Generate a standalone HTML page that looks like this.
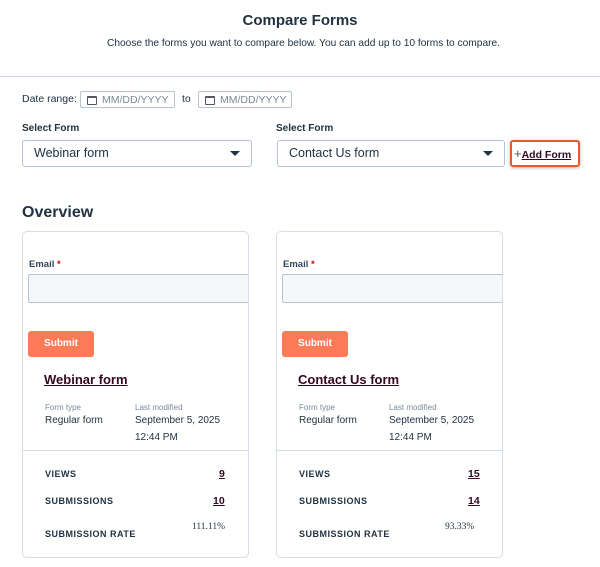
<!DOCTYPE html><html><head><style>
body{margin:0;width:600px;height:567px;background:#fff;font-family:"Liberation Sans",sans-serif;color:#213343;position:relative;overflow:hidden}
.a{position:absolute;white-space:nowrap}
.date{position:absolute;top:91px;height:17px;border:1px solid #b8c3cf;border-radius:2px;font-size:10.5px;color:#7c8a99;line-height:16px;padding-left:21px;box-sizing:border-box}
.date:before{content:"";position:absolute;left:6px;top:4px;width:8px;height:6px;border:1px solid #556;border-top-width:2px;border-radius:1px}
.sel{position:absolute;top:140px;height:27px;border:1px solid #b8c3cf;border-radius:3px;box-sizing:border-box;font-size:12.5px;line-height:25px;padding-left:11px;color:#213343}
.sel:after{content:"";position:absolute;right:11px;top:10px;border-left:5px solid transparent;border-right:5px solid transparent;border-top:5px solid #213343}
.card{position:absolute;top:231px;width:227px;height:327px;border:1px solid #d6dde5;border-radius:5px;box-sizing:border-box;overflow:hidden}
.inp{position:absolute;left:5px;top:42px;width:240px;height:27px;background:#f5f8fa;border:1px solid #b8c3cf;border-radius:2px}
.btn{position:absolute;left:5px;top:99px;width:66px;height:26px;background:#ff7a59;border-radius:3px;color:#fff;font-weight:bold;font-size:10px;text-align:center;line-height:26px}
.nm{position:absolute;left:21px;top:140px;font-size:13px;font-weight:bold;color:#33071f;text-decoration:underline}
.sm{font-size:8px;color:#7c8a99}.md{font-size:10px;color:#213343}
.st{font-size:9px;font-weight:bold;letter-spacing:.5px}
.hr{position:absolute;left:0;right:0;top:218px;border-top:1px solid #d6dde5}
.v{position:absolute;font-size:10.5px;font-weight:bold;color:#33071f;text-decoration:underline}
</style></head><body>
<div class="a" style="left:0;width:600px;text-align:center;top:12px;font-size:15px;font-weight:bold">Compare Forms</div>
<div class="a" style="left:0;width:607px;text-align:center;top:38px;font-size:10.2px">Choose the forms you want to compare below. You can add up to 10 forms to compare.</div>
<div class="a" style="left:0;right:0;top:76px;border-top:1px solid #cbd6e2"></div>
<div class="a" style="left:22px;top:93px;font-size:10.5px">Date range:</div>
<div class="date" style="left:80px;width:95px">MM/DD/YYYY</div>
<div class="a" style="left:182px;top:93px;font-size:10.5px">to</div>
<div class="date" style="left:198px;width:94px">MM/DD/YYYY</div>
<div class="a" style="left:22px;top:123px;font-size:10px;font-weight:bold">Select Form</div>
<div class="a" style="left:276px;top:123px;font-size:10px;font-weight:bold">Select Form</div>
<div class="sel" style="left:22px;width:230px">Webinar form</div>
<div class="sel" style="left:277px;width:228px">Contact Us form</div>
<div class="a" style="left:510px;top:140px;width:70px;height:27px;border:2px solid #e8572e;border-radius:3px;box-sizing:border-box;box-shadow:0 1px 3px rgba(0,0,0,.3);font-size:10.5px;line-height:23px;color:#33071f;padding-left:2px"><span style="font-size:13px;color:#555">+</span><b style="text-decoration:underline">Add Form</b></div>
<div class="a" style="left:22px;top:204px;font-size:16px;font-weight:bold">Overview</div>

<div class="card" style="left:22px">
<div class="a md" style="left:6px;top:27px;font-size:9.5px;font-weight:bold;color:#33475b">Email <span style="color:#d00">*</span></div>
<div class="inp"></div><div class="btn">Submit</div>
<div class="nm">Webinar form</div>
<div class="a sm" style="left:22px;top:171px">Form type</div><div class="a md" style="left:22px;top:183px">Regular form</div>
<div class="a sm" style="left:112px;top:171px">Last modified</div><div class="a md" style="left:112px;top:183px">September 5, 2025</div><div class="a md" style="left:112px;top:200px">12:44 PM</div>
<div class="hr"></div>
<div class="a st" style="left:22px;top:237px">VIEWS</div><div class="v" style="left:196px;top:236px">9</div>
<div class="a st" style="left:22px;top:264px">SUBMISSIONS</div><div class="v" style="left:190px;top:263px">10</div>
<div class="a st" style="left:22px;top:297px">SUBMISSION RATE</div><div class="a" style="left:169px;top:290px;font-size:9.5px;font-family:'Liberation Serif',serif">111.11%</div>
</div>

<div class="card" style="left:276px">
<div class="a md" style="left:6px;top:27px;font-size:9.5px;font-weight:bold;color:#33475b">Email <span style="color:#d00">*</span></div>
<div class="inp"></div><div class="btn">Submit</div>
<div class="nm">Contact Us form</div>
<div class="a sm" style="left:22px;top:171px">Form type</div><div class="a md" style="left:22px;top:183px">Regular form</div>
<div class="a sm" style="left:112px;top:171px">Last modified</div><div class="a md" style="left:112px;top:183px">September 5, 2025</div><div class="a md" style="left:112px;top:200px">12:44 PM</div>
<div class="hr"></div>
<div class="a st" style="left:22px;top:237px">VIEWS</div><div class="v" style="left:191px;top:236px">15</div>
<div class="a st" style="left:22px;top:264px">SUBMISSIONS</div><div class="v" style="left:191px;top:263px">14</div>
<div class="a st" style="left:22px;top:297px">SUBMISSION RATE</div><div class="a" style="left:168px;top:290px;font-size:9.5px;font-family:'Liberation Serif',serif">93.33%</div>
</div>
</body></html>
